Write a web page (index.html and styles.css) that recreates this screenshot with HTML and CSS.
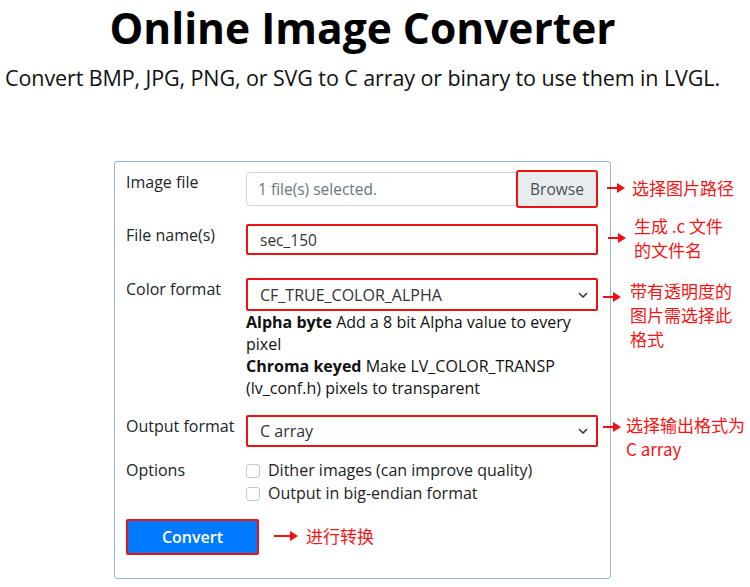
FILE: index.html
```html
<!DOCTYPE html>
<html lang="en">
<head>
  <meta charset="UTF-8" />
  <meta name="viewport" content="width=device-width, initial-scale=1.0"/>
  <title>Online Image Converter</title>
  <link rel="stylesheet" href="styles.css">
</head>
<body>

  <div class="page">
    <h1 class="title">Online Image Converter</h1>
    <p class="lead">Convert BMP, JPG, PNG, or SVG to C array or binary to use them in LVGL.</p>

    <form class="card">
      <div class="row row-file">
        <label class="lbl">Image file</label>
        <div class="ctrl">
          <div class="file-box">
            <span class="file-text">1 file(s) selected.</span>
            <span class="browse">Browse</span>
          </div>
          <div class="note note-file"><i class="arrow"></i><span>选择图片路径</span></div>
        </div>
      </div>

      <div class="row row-name">
        <label class="lbl">File name(s)</label>
        <div class="ctrl">
          <div class="field mark">sec_150</div>
          <div class="note note-name"><i class="arrow"></i><span>生成 .c 文件<br>的文件名</span></div>
        </div>
      </div>

      <div class="row row-color">
        <label class="lbl">Color format</label>
        <div class="ctrl">
          <div class="field select mark">
            CF_TRUE_COLOR_ALPHA
            <svg class="chev" width="10" height="6" viewBox="0 0 10 6"><path d="M1 1l4 4 4-4" fill="none" stroke="#343a40" stroke-width="1.6"/></svg>
          </div>
          <div class="help">
            <b>Alpha byte</b> Add a 8 bit Alpha value to every pixel<br>
            <b>Chroma keyed</b> Make LV_COLOR_TRANSP (lv_conf.h) pixels to transparent
          </div>
          <div class="note note-color"><i class="arrow"></i><span>带有透明度的<br>图片需选择此<br>格式</span></div>
        </div>
      </div>

      <div class="row row-out">
        <label class="lbl">Output format</label>
        <div class="ctrl">
          <div class="field select mark">
            C array
            <svg class="chev" width="10" height="6" viewBox="0 0 10 6"><path d="M1 1l4 4 4-4" fill="none" stroke="#343a40" stroke-width="1.6"/></svg>
          </div>
          <div class="note note-out"><i class="arrow"></i><span>选择输出格式为<br>C array</span></div>
        </div>
      </div>

      <div class="row row-opts">
        <label class="lbl">Options</label>
        <div class="ctrl">
          <div class="check"><i class="box"></i>Dither images (can improve quality)</div>
          <div class="check"><i class="box"></i>Output in big-endian format</div>
        </div>
      </div>

      <div class="submit">
        <button type="button" class="btn">Convert</button>
        <div class="note note-btn"><i class="arrow long"></i><span>进行转换</span></div>
      </div>
    </form>
  </div>

</body>
</html>
```

FILE: styles.css
```css
* {
  box-sizing: border-box;
  margin: 0;
  padding: 0;
}
body {
  font-family: 'Open Sans', 'Noto Sans', sans-serif;
  background: #fff;
  color: #212529;
}

.page {
  width: 725px;
  text-align: center;
}

.title {
  font-size: 42.5px;
  font-weight: 700;
  color: #000;
  line-height: 56px;
}

.lead {
  font-size: 21.5px;
  letter-spacing: -0.1px;
  color: #111;
  line-height: 28px;
  margin-top: 8px;
}

/* Form card */
.card {
  width: 497px;
  margin: 69px auto 0 auto;
  border: 1.5px solid #93b6e0;
  border-radius: 3px;
  padding: 9px 12px 23px 11px;
  text-align: left;
  font-size: 16px;
}

.row {
  display: grid;
  grid-template-columns: 120px 1fr;
  align-items: start;
}
.row-name { margin-top: 18px; }
.row-color { margin-top: 23px; }
.row-out { margin-top: 16px; }
.row-opts { margin-top: 12px; }

.lbl {
  line-height: 20px;
  padding-top: 1px;
  color: #212529;
}

.ctrl {
  position: relative;
}

.file-box {
  height: 34px;
  border: 1px solid #ced4da;
  border-radius: 4px;
  display: flex;
  align-items: center;
  justify-content: space-between;
  margin-top: 1px;
  color: #6c757d;
  font-size: 15.5px;
}
.file-text {
  padding-left: 11px;
}
.browse {
  height: 38px;
  width: 82px;
  margin-right: -1px;
  background: #e9ecef;
  border: 2px solid #f01010;
  border-radius: 3px;
  display: flex;
  align-items: center;
  justify-content: center;
  color: #495057;
}

.field {
  height: 31px;
  border: 2px solid #ee1111;
  border-radius: 2px;
  padding: 0 12px;
  display: flex;
  align-items: center;
  color: #333;
  width: 352px;
  font-size: 15.5px;
}
.select {
  height: 33px;
  justify-content: space-between;
  padding-right: 8px;
  font-size: 16px;
}
.row-out .select {
  height: 32px;
}

.help {
  line-height: 22px;
  color: #111;
  padding-right: 14px;
}

.check {
  display: flex;
  align-items: center;
  line-height: 23px;
  color: #222;
}
.box {
  width: 14px;
  height: 14px;
  border: 1px solid #c4c8cc;
  border-radius: 3px;
  margin-right: 8px;
  background: #fff;
}

.submit {
  position: relative;
  margin-top: 14px;
}
.btn {
  width: 133px;
  height: 36px;
  background: #007bff;
  color: #fff;
  border: 2px solid #f01010;
  border-radius: 2px;
  font-family: inherit;
  font-size: 16px;
  font-weight: 600;
}

/* Red annotations */
.note {
  position: absolute;
  display: flex;
  align-items: center;
  color: #f41515;
  font-family: 'Noto Sans CJK SC', 'Noto Sans', sans-serif;
  font-size: 17px;
  line-height: 24px;
  white-space: nowrap;
}
.arrow {
  position: relative;
  display: block;
  width: 16px;
  height: 2px;
  background: #f01010;
}
.arrow::after {
  content: "";
  position: absolute;
  right: -2px;
  top: -4px;
  border-left: 8px solid #f01010;
  border-top: 5px solid transparent;
  border-bottom: 5px solid transparent;
}
.arrow.long {
  width: 22px;
}

.note-file { left: 361px; top: 5px; gap: 9px; }
.note-name { left: 362px; top: -10px; gap: 10px; }
.note-color { left: 357px; top: 1px; gap: 11px; align-items: flex-start; }
.note-color .arrow { margin-top: 17px; }
.note-out { left: 357px; top: -2px; gap: 7px; align-items: flex-start; }
.note-out .arrow { margin-top: 13px; }
.note-btn { left: 148px; top: 5px; gap: 10px; }
```
